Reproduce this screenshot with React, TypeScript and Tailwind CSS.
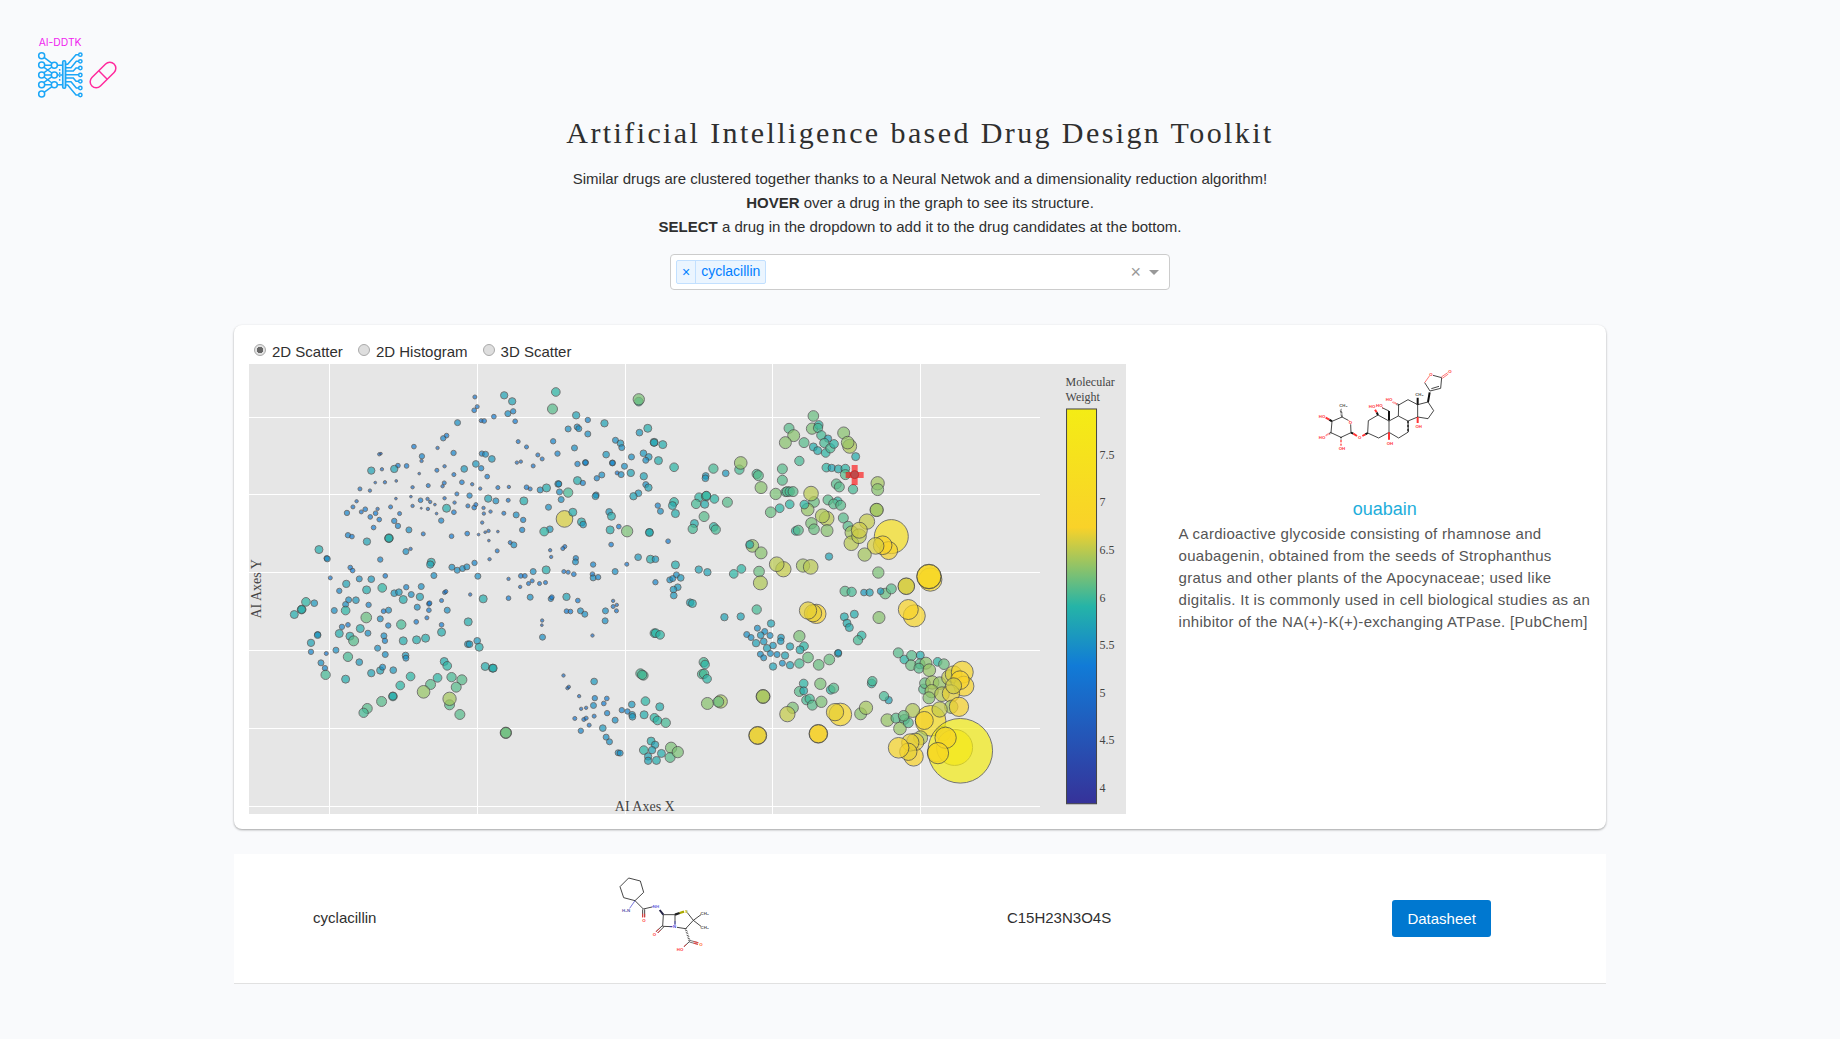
import React from 'react';

type Region = { dx: number; dy: number; samples: string };

// Marker samples, one block per region of the embedding. Each triple is x, y
// and radius in thirds of a pixel, relative to the region's origin.
const REGIONS: Region[] = [
  {
    dx: -19,
    dy: -44,
    samples: `734,230,6 741,259,6 732,270,7 822,225,11 846,243,11 849,273,8 833,280,9 791,289,7 753,301,6 762,302,7
855,303,7 977,215,13 967,266,15 1038,285,11 1073,299,8 682,307,9 1041,320,9 1046,325,9 1014,326,9 1073,341,9
649,346,7 639,354,8 551,379,7 622,383,5 575,408,8 574,422,5 670,398,8 864,364,6 889,380,6 969,363,8
1033,383,9 982,400,8 923,404,6 936,416,6 860,427,5 872,424,5 909,437,6 447,402,5 452,400,4 755,400,8
766,402,9 785,416,10 737,431,10 753,444,8 702,446,10 643,438,5 620,450,6 529,437,7 503,436,7 492,446,11
455,447,5 423,451,11 567,460,4 671,463,6 771,469,7 1042,431,8 1066,427,9 1066,427,8 1100,474,8 435,487,4
464,486,5 498,482,4 389,506,6 419,511,5 547,501,5 594,496,6 642,488,6 637,498,5 695,486,7 726,492,5
750,505,5 803,502,6 836,500,5 889,501,7 900,506,6 930,509,9 949,503,12 984,491,10 986,491,9 988,515,9
1014,517,14 1042,481,12 1058,488,8 993,538,9 1098,524,9 1096,528,10 680,521,6 718,526,8 497,535,4 542,529,4
571,540,7 592,536,5 600,545,5 614,553,4 643,534,5 673,547,5 547,557,5 573,564,3 593,566,5 619,580,4
649,564,12 671,576,7 713,557,6 732,562,7 737,553,6 760,563,5 774,535,11 797,542,9 834,540,6 881,542,12
761,580,5 781,574,5 821,579,6 858,584,9 879,599,8 955,561,9 379,543,5 368,560,6 350,578,8 393,575,6
405,567,7 442,566,5 436,579,7 420,590,7 481,560,6 508,580,6 447,598,7 492,602,8 503,617,8 430,622,7
536,629,9 633,601,8 756,607,5 1003,596,25 1028,576,12 1054,605,12 1059,613,10 876,629,8 959,627,10 942,634,13
353,645,8 365,649,7 410,664,11 476,654,13 476,654,12 579,641,6 664,648,7 711,640,7 745,643,4 765,636,4
775,632,5 803,634,4 776,661,4 840,667,6 851,674,9 801,692,6 541,686,5 527,694,9 266,688,12 289,714,8
291,716,9 450,718,8 778,717,5 960,690,5 1004,679,6 998,685,6 963,710,5 1037,714,8`,
  },
  {
    dx: -19,
    dy: 196,
    samples: `603,6,12 600,13,11 360,22,7 367,31,7 300,53,6 387,56,9 423,57,10 465,47,7 611,46,9 665,21,9
681,30,9 697,25,9 710,20,9 733,8,8 743,48,9 348,71,11 327,92,8 409,89,12 456,83,13 528,81,8
573,79,9 492,99,10 506,96,10 543,103,9 519,118,12 569,110,11 643,97,6 647,94,6 634,121,6 720,103,5
759,116,12 835,56,5 835,114,7 872,47,7 884,47,7 909,34,9 948,29,12 870,80,5 895,70,6 906,62,6
928,70,6 946,67,6 1001,34,6 1014,36,6 1031,42,7 1036,5,9 1089,13,8 1087,42,7 1089,53,9 1104,51,8
227,125,13 252,129,10 214,148,13 214,148,12 192,163,12 355,119,9 377,120,10 346,133,9 346,151,13 312,151,9
415,134,8 596,131,7 598,129,7 596,150,7 561,141,9 475,150,9 460,153,7 651,150,9 590,173,6 558,185,7
408,172,16 450,176,9 474,196,8 513,193,14 714,185,12 634,194,7 634,216,12 335,200,8 353,194,7 390,205,12
327,220,12 359,228,12 370,242,15 413,219,9 461,227,9 464,242,8 519,242,12 559,239,12 586,234,12 262,223,9
262,225,10 242,248,11 242,275,8 288,280,6 317,270,9 442,264,9 465,283,9 353,290,14 387,306,10 526,286,10
527,294,9 272,308,9 284,324,8 286,344,14 346,357,12 423,339,11 450,331,11 457,321,9 489,330,10 541,349,13
510,376,13 488,409,13 488,408,12 642,304,12 651,317,13 664,351,14 622,353,13 695,359,15 601,373,15 580,395,19
678,381,15 658,434,15 658,416,20 454,424,15 411,445,15 400,458,14 689,463,15 741,242,10 713,252,10 718,252,10
747,261,12 765,319,12 787,324,12 789,324,12 900,111,9 962,116,8 965,111,7 1009,110,11 1043,121,7 1009,153,7
1021,154,7 1051,152,9 1064,162,9 936,181,5 935,195,4 937,231,9 1087,226,5 1000,346,5 1012,384,5 1016,380,5
1092,364,10 1047,408,5 1094,414,8 1090,436,9 1053,446,5 1068,443,5 1092,468,6 1034,475,6 1061,478,6 1068,474,6
1077,495,6 1052,512,8 827,518,17 827,518,16`,
  },
  {
    dx: 351,
    dy: -4,
    samples: `13,189,11 46,240,9 61,249,10 65,262,9 18,283,10 37,308,9 37,308,8 5,344,9 73,318,9 51,338,6
63,343,9 92,338,11 94,290,9 118,217,10 143,204,12 116,124,13 116,117,17 162,246,12 162,247,11 188,253,12
130,279,10 146,290,10 137,300,9 175,301,12 222,321,13 131,348,11 137,373,9 145,382,11 115,399,10 100,408,11
340,325,14 317,347,10 316,354,10 377,339,10 297,411,13 318,408,14 319,406,13 288,431,14 343,416,13 314,432,12
382,426,15 222,425,13 217,436,12 226,460,12 173,436,8 181,453,9 27,455,10 34,468,12 30,509,12 56,499,7
81,513,17 148,516,11 148,517,12 33,553,7 204,543,7 312,469,15 283,490,12 278,506,14 341,500,13 347,508,14
80,612,6 114,591,10 151,597,12 166,597,10 226,614,12 296,628,11 322,636,11 45,634,9 229,644,9 209,659,9
218,655,9 242,653,10 166,666,8 233,681,10 220,688,10 221,706,10`,
  },
  {
    dx: 251,
    dy: 226,
    samples: `316,62,9 315,92,9 339,32,5 339,49,6 350,44,5 349,62,6 570,37,11 577,40,12 463,129,13 467,129,13
480,134,13 673,81,11 722,79,11 421,250,14 430,256,14 426,254,14 611,216,14 615,223,13 606,252,14 612,251,14 621,266,13
622,340,18 662,334,20 655,335,16 320,325,7 311,340,7 321,369,8 345,390,9 308,414,10 318,441,9 328,455,9
354,488,9 360,489,9 365,360,8 382,364,8 395,343,10 396,374,10 397,380,10 436,333,13 479,350,12 432,374,12
463,383,13 472,391,13 497,398,14 453,453,12 465,464,11 431,480,13 456,480,11 444,499,11 444,512,11 469,511,12
484,490,12 513,473,17 510,502,15 533,486,17`,
  },
  {
    dx: 481,
    dy: 26,
    samples: `250,77,16 177,114,15 191,136,18 166,157,18 222,157,15 246,115,17 266,104,13 264,113,14 274,135,14 294,145,11
250,170,12 263,181,12 283,158,14 287,188,13 301,174,14 312,161,13 341,128,18 359,168,21 353,157,19 377,199,12
208,212,14 289,232,13 305,233,11 325,236,12 346,235,13 346,253,15 369,297,14 443,279,20 443,298,18 157,236,15
157,270,15 28,238,14 32,218,19 80,251,14 85,256,15 93,292,18 137,311,17 167,305,14 172,304,15 179,304,14
189,304,15 252,335,16 243,310,22 233,358,19 223,343,13 294,329,15 323,333,13 311,341,15 332,345,15 149,354,13
179,342,13 122,366,16 290,385,22 277,377,21 244,399,17 252,417,16 291,421,18 197,422,13 205,420,15 340,383,15
354,408,15 319,281,15 328,290,15 440,359,19 440,359,20 411,394,23 365,427,20 364,459,22 387,438,22 388,420,24
484,439,51 476,481,27 458,465,28 437,467,25 404,493,20 297,499,11 67,467,19 59,463,12 93,488,18 11,551,13
34,536,13 87,544,16 91,578,21 160,537,23 140,522,22 219,526,20 242,530,22 445,547,17 601,568,35 597,559,37
597,559,36 529,588,24 529,588,25 345,603,15 365,605,14 402,607,10 419,607,11 466,610,16 452,603,10 484,596,15
374,253,12`,
  },
  {
    dx: 481,
    dy: 226,
    samples: `80,58,14 259,71,29 249,69,26 234,61,26 343,80,12 373,72,12 351,99,12 358,112,12 395,136,13
384,150,14 447,82,18 553,77,33 535,58,30 123,100,11 82,114,9 104,124,9 50,133,9 63,142,9 92,135,10
120,136,9 78,159,11 101,154,10 153,142,10 152,153,10 129,166,10 111,174,11 91,192,9 101,203,9 121,190,9
141,193,9 165,196,11 129,229,11 157,219,9 180,225,11 180,169,11 208,138,17 222,168,13 210,179,12 234,202,16
208,220,14 266,224,16 298,208,16 324,190,11 325,188,10 425,280,13 427,273,14 221,280,13 208,304,15 221,302,12
271,281,17 302,299,13 311,294,15 229,330,14 239,326,14 247,345,15 274,335,17 188,353,17 172,372,23 99,319,21
99,319,20 83,436,27 83,436,26 265,431,28 265,431,27 331,373,34 315,366,26 392,371,18 408,353,20 476,330,11
462,318,14 505,188,15 523,208,13 545,196,15 571,195,12 543,225,16 570,221,15 588,219,18 567,234,15 623,215,13
642,222,16 598,240,19 581,297,15 585,279,16 607,277,20 629,279,19 605,303,20 597,323,18 636,312,22 658,262,23
671,252,25 697,246,33 702,288,30 690,270,28 663,310,26 671,287,24 664,350,20 687,350,29 602,392,46 629,358,23
548,361,21 583,391,27 472,390,19 498,384,15 523,388,15 510,415,19 535,398,15 521,377,16 572,443,21 551,499,29
556,455,26 541,457,26 535,485,26 506,473,31 621,487,28 640,430,22 674,472,54 691,482,97 647,443,32 624,489,32`,
  },
];

type Stop = [number, number, number, number];

const SCALE: Stop[] = [
  [0, 54, 50, 153],
  [0.35, 17, 123, 215],
  [0.5, 37, 180, 167],
  [0.7, 249, 210, 41],
  [1, 244, 236, 21],
];

// Radius to position on the colour scale.
const WEIGHTS: [number, number][] = [
  [3, 0.2],
  [6, 0.33],
  [8, 0.38],
  [10, 0.43],
  [12, 0.48],
  [14, 0.53],
  [17, 0.58],
  [20, 0.62],
  [23, 0.65],
  [25, 0.67],
  [28, 0.71],
  [35, 0.76],
  [52, 0.87],
  [97, 1],
];

function weightOf(r: number) {
  for (let i = 1; i < WEIGHTS.length; i++) {
    const [r0, t0] = WEIGHTS[i - 1];
    const [r1, t1] = WEIGHTS[i];
    if (r <= r1) return t0 + ((r - r0) / (r1 - r0)) * (t1 - t0);
  }
  return 1;
}

function colorOf(t: number) {
  for (let i = 1; i < SCALE.length; i++) {
    const a = SCALE[i - 1];
    const b = SCALE[i];
    if (t <= b[0]) {
      const k = (t - a[0]) / (b[0] - a[0]);
      const mix = (n: 1 | 2 | 3) => Math.round(a[n] + (b[n] - a[n]) * k);
      return `rgb(${mix(1)},${mix(2)},${mix(3)})`;
    }
  }
  return 'rgb(244,236,21)';
}

const TICKS: [string, number][] = [
  ['7.5', 95],
  ['7', 142],
  ['6.5', 190],
  ['6', 238],
  ['5.5', 285],
  ['5', 333],
  ['4.5', 380],
  ['4', 428],
];

function Logo() {
  return (
    <svg viewBox="0 0 360 270" className="h-[90px] w-[120px]" fill="none" role="img" aria-label="AI-DDTK logo">
      <text x="56" y="77" fontSize="31" fill="#f01ff0" className="font-['Inter',sans-serif]">
        AI-DDTK
      </text>
      <g stroke="#1ba6f7" strokeWidth="4.5">
        {[107, 135, 165, 194, 222].map((y) => (
          <circle key={y} cx="65" cy={y} r="9" />
        ))}
        {[136, 165, 194].map((y) => (
          <circle key={y} cx="103" cy={y} r="9" />
        ))}
        <path d="M72 112 96 130M74 136H94M74 165H94M74 194H94M72 217 96 200M72 142 96 159M72 158 96 141M72 171 96 189M72 187 96 170M112 136H127M112 165H127M112 194H127" />
        <path d="M119 147V183" strokeDasharray="5 5" />
        <rect x="128" y="122" width="9" height="83" rx="4" fill="#a9dcfb" />
        <path d="M137 133H143L168 104H176M137 143H153L169 124H176M137 153H160L168 144H176M137 164H176M137 174H160L168 184H176M137 185H153L169 204H176M137 195H143L168 225H176" />
        {[104, 124, 144, 165, 184, 204, 225].map((y) => (
          <circle key={y} cx="181" cy={y} r="5" />
        ))}
      </g>
      <g stroke="#ff2a9d" strokeWidth="4.5" transform="rotate(-45 249 165)">
        <rect x="202" y="147" width="94" height="36" rx="18" />
        <path d="M249 147V183" />
      </g>
    </svg>
  );
}

function ScatterPlot() {
  return (
    <svg
      viewBox="0 0 877 450"
      className="block h-auto w-full bg-[#e6e6e6] font-['Liberation_Serif',serif]"
      role="img"
      aria-label="Drug embedding scatter plot"
    >
      <defs>
        <linearGradient id="weight" x1="0" y1="1" x2="0" y2="0">
          {SCALE.map(([o, r, g, b]) => (
            <stop key={o} offset={o} stopColor={`rgb(${r},${g},${b})`} />
          ))}
        </linearGradient>
      </defs>
      <g stroke="#fff" strokeWidth="1" shapeRendering="crispEdges">
        {[80, 228, 376, 523, 671].map((x) => (
          <line key={x} x1={x + 0.5} x2={x + 0.5} y1="0" y2="450" />
        ))}
        {[53, 130, 208, 286, 364, 442].map((y) => (
          <line key={y} x1="0" x2="791" y1={y + 0.5} y2={y + 0.5} />
        ))}
      </g>
      {REGIONS.map((region, i) => (
        <g key={i} transform={`translate(${region.dx} ${region.dy}) scale(0.33333)`} stroke="#444" strokeWidth="3">
          {region.samples.split(/\s+/).map((s, j) => {
            const [x, y, r] = s.split(',').map(Number);
            return <circle key={j} cx={x + 1} cy={y + 1} r={r} fill={colorOf(weightOf(r))} opacity="0.7" />;
          })}
        </g>
      ))}
      <path d="M603 101h6v7h6v6h-6v7h-6v-7h-6v-6h6z" fill="#f00" fillOpacity="0.6" />
      <g fill="#444">
        <text x="396" y="447" fontSize="14" textAnchor="middle">
          AI Axes X
        </text>
        <text x="12" y="225" fontSize="14" textAnchor="middle" transform="rotate(-90 12 225)">
          AI Axes Y
        </text>
        <text x="817" y="22" fontSize="12">
          Molecular
        </text>
        <text x="817" y="37" fontSize="12">
          Weight
        </text>
        {TICKS.map(([label, y]) => (
          <text key={label} x="851" y={y} fontSize="12">
            {label}
          </text>
        ))}
      </g>
      <rect x="818" y="45" width="30" height="395" fill="url(#weight)" stroke="#444" />
    </svg>
  );
}

const RED = '#f33';

function Ouabain() {
  return (
    <svg viewBox="0 0 510 330" className="h-[110px] w-[170px]" role="img" aria-label="Structure of ouabain">
      <g fill="none" stroke="#222" strokeWidth="2.5">
        <path d="M96 199 126 186 145 196M96 199 93 233 123 247 153 233 152 208" />
        <path d="M203 234 205 197 234 180 267 198V232L236 249ZM267 198 295 183 324 198 325 231 296 249 267 232M295 183 296 150 324 134 353 149 353 186 324 198M353 149 384 141 401 167 384 191 353 186M390 108 374 83M399 61 425 68 422 100 390 108M267 198V168L246 158" />
        <path d="M394 101 417 94" />
      </g>
      <g stroke="#111" strokeWidth="6">
        <path d="M353 149V128M384 141 389 112M267 195V168M153 233 160 236M234 180 230 172M203 234 196 238M96 199 88 194" />
      </g>
      <g stroke="#222" strokeWidth="6" strokeDasharray="2 2">
        <path d="M126 186 122 162M324 198V231M93 233 88 236M296 150 290 147M123 247V255" />
      </g>
      <g stroke={RED} strokeWidth="6">
        <path d="M267 232V254M353 186V204M196 238 187 243M160 236 171 243M88 194 77 188M230 172 225 164" />
      </g>
      <g stroke={RED} strokeWidth="5" strokeDasharray="2 2">
        <path d="M88 236 77 242M290 147 278 141M123 255V272" />
      </g>
      <g stroke={RED} strokeWidth="2">
        <path d="M145 196 150 200M424 66 443 53M427 70 445 57M374 83 389 62M246 158 250 160" />
      </g>
      <g fill={RED} fontSize="13" fontWeight="bold" textAnchor="middle" className="font-['Liberation_Sans',sans-serif]">
        <text x="66" y="190">HO</text>
        <text x="66" y="253">HO</text>
        <text x="126" y="286">OH</text>
        <text x="151" y="206">O</text>
        <text x="179" y="252">O</text>
        <text x="216" y="160">HO</text>
        <text x="238" y="157">HO</text>
        <text x="267" y="139">HO</text>
        <text x="270" y="271">OH</text>
        <text x="356" y="220">OH</text>
        <text x="393" y="64">O</text>
        <text x="450" y="55">O</text>
        <text x="130" y="157" fill="#555">CH₃</text>
        <text x="358" y="123" fill="#555">CH₃</text>
      </g>
    </svg>
  );
}

function Cyclacillin() {
  return (
    <svg viewBox="0 0 390 285" className="mx-auto h-[95px] w-[130px]" role="img" aria-label="Structure of cyclacillin">
      <g fill="none" stroke="#222" strokeWidth="2.5">
        <path d="M102 107 68 98 57 65 83 39 118 48 128 82ZM102 107 127 132 153 126M187 149 185 184 214 185M187 149H222V178M222 149 249 140M259 143 277 166 254 191 228 187M277 166 300 149M277 166 300 184M266 229 249 245" />
        <path d="M125 133V156M131 133V156" />
        <path d="M184 182 165 200M188 186 170 204" />
      </g>
      <path d="M102 107 86 130" stroke="#33c" strokeWidth="2" />
      <path d="M222 168V180M214 185H206M153 126 158 124" stroke="#33c" strokeWidth="2" />
      <path d="M187 149 176 135" stroke="#224" strokeWidth="6" />
      <path d="M222 149 236 144" stroke="#222" strokeWidth="7" />
      <path d="M236 144 249 140" stroke="#aa0" strokeWidth="7" />
      <path d="M254 191 266 229" stroke="#222" strokeWidth="6" strokeDasharray="2 3" />
      <path d="M266 226 292 233M265 231 291 238" stroke="#333" strokeWidth="2" />
      <path d="M278 230 292 233M278 235 291 238M125 146V158M131 146V158M174 191 165 200M178 196 170 204M256 238 249 245" stroke={RED} strokeWidth="2.5" />
      <g fontSize="13" fontWeight="bold" textAnchor="middle" className="font-['Liberation_Sans',sans-serif]">
        <text x="75" y="142" fill="#55a">H₂N</text>
        <text x="165" y="130" fill="#66d">NH</text>
        <text x="221" y="190" fill="#44d">N</text>
        <text x="256" y="143" fill="#aa0">S</text>
        <text x="129" y="171" fill={RED}>O</text>
        <text x="160" y="214" fill={RED}>O</text>
        <text x="237" y="258" fill={RED}>HO</text>
        <text x="300" y="242" fill="#f62">O</text>
        <text x="311" y="151" fill="#555">CH₃</text>
        <text x="311" y="192" fill="#555">CH₃</text>
      </g>
    </svg>
  );
}

function DrugSelect() {
  return (
    <div className="mx-auto mt-[15px] flex h-9 w-full max-w-[500px] items-center rounded border border-[#ccc] bg-white pr-[10px] pl-[5px]">
      <span className="flex h-6 items-stretch rounded-xs border border-[#c2e0ff] bg-[#ebf5ff] text-sm leading-5 text-[#007eff]">
        <button type="button" aria-label="Remove cyclacillin" className="border-r border-[#c2e0ff] px-[5px]">
          ×
        </button>
        <span className="px-[5px]">cyclacillin</span>
      </span>
      <input type="text" role="combobox" aria-expanded="false" aria-label="Select a drug" className="h-8 min-w-0 flex-1 px-1 outline-none" />
      <button type="button" aria-label="Clear all" className="mr-2 text-lg leading-5 text-[#999]">
        ×
      </button>
      <button type="button" aria-label="Open list" className="h-[5px] w-[10px]">
        <svg viewBox="0 0 10 5" className="block h-[5px] w-[10px]" fill="#999">
          <path d="M0 0H10L5 5z" />
        </svg>
      </button>
    </div>
  );
}

const MODES = ['2D Scatter', '2D Histogram', '3D Scatter'];

export default function App() {
  return (
    <div className="min-h-screen bg-[#f9fafc] pb-14 font-['Liberation_Sans',Arial,sans-serif] text-[15px] leading-6 text-[#2f2f2f]">
      <header className="px-5 pt-5">
        <Logo />
      </header>
      <main className="mx-auto w-3/4 px-1">
        <h1 className="text-center font-['Liberation_Serif',serif] text-[30px] leading-[46px] tracking-[0.08em]">
          Artificial Intelligence based Drug Design Toolkit
        </h1>
        <div className="mt-[11px] text-center">
          <p>Similar drugs are clustered together thanks to a Neural Netwok and a dimensionality reduction algorithm!</p>
          <p>
            <strong>HOVER</strong> over a drug in the graph to see its structure.
          </p>
          <p>
            <strong>SELECT</strong> a drug in the dropdown to add it to the drug candidates at the bottom.
          </p>
        </div>
        <DrugSelect />

        <section className="mt-[35px] grid grid-cols-[17fr_8fr] gap-[53px] rounded-lg bg-white px-[15px] pb-[15px] shadow-[0_1px_3px_rgba(0,0,0,0.12),0_1px_2px_rgba(0,0,0,0.24)]">
          <div>
            <fieldset className="flex h-[39px] items-center gap-[15px] pt-[15px] pl-[5px]">
              {MODES.map((mode, i) => (
                <label key={mode} className="flex items-center gap-[6px]">
                  <input
                    type="radio"
                    name="mode"
                    defaultChecked={i === 0}
                    className="mb-[5px] size-3 appearance-none rounded-full border border-[#aaa] bg-[#dedede] checked:bg-[radial-gradient(circle,#666_0_3px,#e2e2e2_3px)]"
                  />
                  {mode}
                </label>
              ))}
            </fieldset>
            <ScatterPlot />
          </div>
          <aside>
            <div className="flex justify-center pt-[30px]">
              <Ouabain />
            </div>
            <a href="#ouabain" className="mt-8 block text-center text-lg leading-6 text-[#1eaedb]">
              ouabain
            </a>
            <p className="mt-[2px] leading-[22px] tracking-[0.02em] text-[#555]">
              A cardioactive glycoside consisting of rhamnose and ouabagenin, obtained from the seeds of Strophanthus gratus
              and other plants of the Apocynaceae; used like digitalis. It is commonly used in cell biological studies as an
              inhibitor of the NA(+)-K(+)-exchanging ATPase. [PubChem]
            </p>
          </aside>
        </section>

        <table className="mt-[25px] w-full table-fixed bg-white text-center">
          <colgroup>
            <col className="w-[16%]" />
            <col className="w-[31%]" />
            <col className="w-[27%]" />
            <col className="w-[26%]" />
          </colgroup>
          <tbody>
            <tr className="border-b border-[#e1e1e1]">
              <td className="pl-[2px]">cyclacillin</td>
              <td className="pt-[11px] pb-[23px]">
                <Cyclacillin />
              </td>
              <td className="pr-[10px]">C15H23N3O4S</td>
              <td className="pl-7">
                <a href="#datasheet" className="inline-block rounded-[3px] bg-[#0078d0] px-[15px] leading-[37px] text-white">
                  Datasheet
                </a>
              </td>
            </tr>
          </tbody>
        </table>
      </main>
    </div>
  );
}
